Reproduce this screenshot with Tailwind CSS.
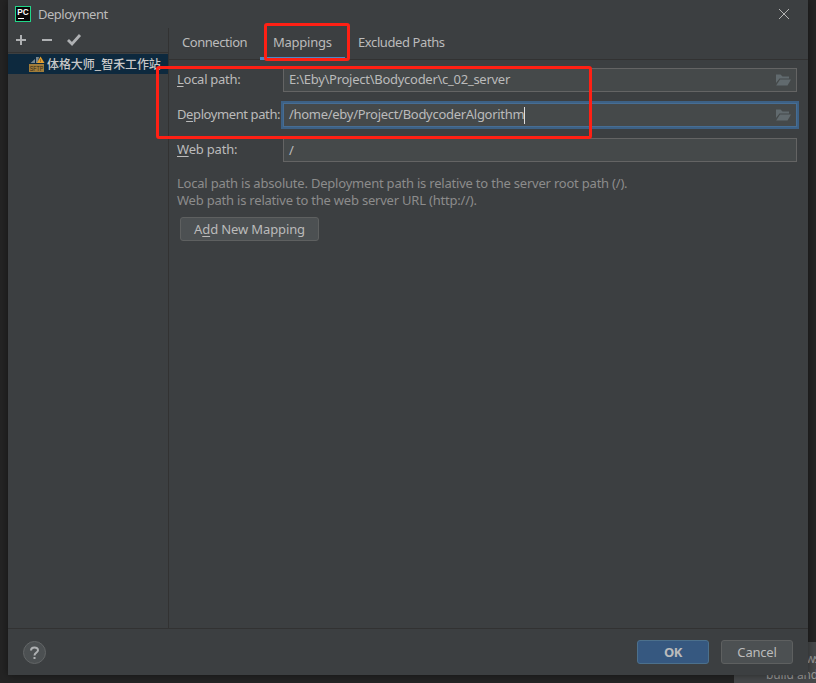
<!DOCTYPE html>
<html lang="en">
<head>
    <meta charset="UTF-8">
    <meta name="viewport" content="width=device-width, initial-scale=1.0">
    <title>Deployment</title>
    <script src="https://cdn.jsdelivr.net/npm/@tailwindcss/browser@4"></script>
</head>
<body class="relative w-[816px] h-[683px] overflow-hidden bg-[#242424] font-['Noto_Sans','Noto_Sans_CJK_SC',sans-serif] text-[13px] leading-[17px] text-[#bbbbbb]">

    <!-- Notification behind the dialog -->
    <div class="absolute left-[734px] top-[642px] w-[82px] h-[41px] bg-[#46484a] text-[12px] text-[#999999]">
        <span class="absolute left-[72px] top-[8px] tracking-[-1px]">ws</span>
        <span class="absolute left-[32px] top-[24px] whitespace-nowrap tracking-[-0.1px]">build and</span>
    </div>

    <!-- Dialog -->
    <div class="relative ml-2 w-[800px] h-[675px] flex flex-col bg-[#3c3f41] shadow-[0_0_8px_rgba(0,0,0,0.45)]">
        <div class="h-7 shrink-0 flex items-center pl-[7px] pr-[18px]">
            <svg class="w-4 h-4" viewBox="0 0 16 16">
                <rect x="0.5" y="0.5" width="15" height="15" fill="#080808" stroke="#21d789"/>
                <text x="2.2" y="9" font-family="Liberation Sans" font-size="9" font-weight="bold" fill="#fff" textLength="11.5" lengthAdjust="spacingAndGlyphs">PC</text>
                <path d="M3 12.5h6" stroke="#fff"/>
            </svg>
            <span class="ml-[7px] tracking-[-0.5px]">Deployment</span>
            <svg class="ml-auto w-3 h-3" viewBox="0 0 12 12">
                <path d="M1 1l10 10M11 1L1 11" stroke="#b4b4b4" fill="none"/>
            </svg>
        </div>

        <div class="flex h-[600px]">
            <div class="w-40 shrink-0">
                <div class="h-[25px] flex items-center pl-2 border-b border-[#323232]">
                    <svg class="w-[70px] h-[14px]" viewBox="0 0 70 14" fill="none" stroke="#afb1b3" stroke-width="2">
                        <path d="M0 7h10M5 2v10"/>
                        <path d="M26 7h10"/>
                        <path d="M52 7l4 4L64 2" stroke-width="2.8"/>
                    </svg>
                </div>
                <div class="mt-px h-5 flex items-center pl-[21px] bg-[#0d293e]">
                    <svg class="w-4 h-4 shrink-0" viewBox="0 0 16 16">
                        <path d="M1.5 7L6 3v4z" fill="#77868f"/>
                        <path d="M7 1h3L8.5 7H7z" fill="#77868f"/>
                        <path d="M11.5 0.5L15.5 7H7.8z" fill="#e3a02f"/>
                        <path d="M11.5 3v3" stroke="#a87022"/>
                        <rect x="0" y="8" width="15" height="8" fill="#a07c3a"/>
                        <text x="0.8" y="14.8" font-family="Liberation Sans" font-size="8" fill="#2e2719" textLength="13.4" lengthAdjust="spacingAndGlyphs">SFTP</text>
                    </svg>
                    <span class="ml-[2px] text-[12px] leading-5 font-medium whitespace-nowrap tracking-[-0.1px] text-[#c8c8c8] font-['Noto_Sans_CJK_SC',sans-serif]">体格大师_智禾工作站</span>
                </div>
            </div>

            <div class="flex-1 border-l border-[#323232]">
                <div class="h-8 flex border-b border-[#323232]">
                    <div class="w-[91px] pt-[6px] pl-[13px] tracking-[-0.45px]">Connection</div>
                    <div class="w-[85px] h-8 pt-[6px] pl-[13px] border-b-3 border-[#4a88c7] tracking-[-0.25px]">Mappings</div>
                    <div class="pt-[6px] pl-[13px] tracking-[-0.4px]">Excluded Paths</div>
                </div>

                <div class="pl-2 pr-[11px] pt-2">
                    <div class="flex items-center h-6">
                        <label class="w-[106px] pb-[2px] tracking-[-0.27px]"><u class="underline-offset-2">L</u>ocal path:</label>
                        <div class="flex-1 h-6 flex items-center justify-between pl-[5px] pr-[5px] border border-[#646464] bg-[#45494a]">
                            <span class="pb-[2px] tracking-[-0.27px]">E:\Eby\Project\Bodycoder\c_02_server</span>
                            <svg class="w-4 h-3" viewBox="0 0 16 12" fill="#616a6e">
                                <path d="M1 0.5h4.5l2 2H14v2H4.5L1 9z"/>
                                <path d="M5 5.5H16l-3.5 6H1.2z"/>
                            </svg>
                        </div>
                    </div>
                    <div class="flex items-center h-6 mt-[11px]">
                        <label class="w-[106px] pb-[2px] whitespace-nowrap tracking-[-0.4px]">D<u class="underline-offset-2">e</u>ployment path:</label>
                        <div class="flex-1 h-6 flex items-center justify-between pl-[5px] pr-[5px] border border-[#466d94] bg-[#45494a] ring-2 ring-[#3d6185]">
                            <span class="flex items-center tracking-[-0.29px]"><span class="pb-[2px]">/home/eby/Project/BodycoderAlgorithm</span><i class="w-px h-[17px] bg-[#dddddd]"></i></span>
                            <svg class="w-4 h-3" viewBox="0 0 16 12" fill="#616a6e">
                                <path d="M1 0.5h4.5l2 2H14v2H4.5L1 9z"/>
                                <path d="M5 5.5H16l-3.5 6H1.2z"/>
                            </svg>
                        </div>
                    </div>
                    <div class="flex items-center h-6 mt-[11px]">
                        <label class="w-[106px] pb-[2px] tracking-[-0.2px]"><u class="underline-offset-2">W</u>eb path:</label>
                        <div class="flex-1 h-6 flex items-center pl-[5px] border border-[#646464] bg-[#45494a]">/</div>
                    </div>
                    <p class="mt-[13px] text-[#8c8c8c] whitespace-nowrap tracking-[-0.21px]">Local path is absolute. Deployment path is relative to the server root path (/).<br>Web path is relative to the web server URL (http://).</p>
                    <button class="mt-2 ml-[3px] w-[139px] h-6 rounded-[3px] border border-[#5e6060] bg-[#4c5052] tracking-[-0.12px]">A<u class="underline-offset-2">d</u>d New Mapping</button>
                </div>
            </div>
        </div>

        <div class="flex-1 flex items-center border-t border-[#323232] pl-[15px] pr-[15px]">
            <div class="w-[23px] h-[23px] mt-px rounded-full border border-[#626566] bg-[#4c5052] flex items-center justify-center">
                <svg class="w-[11px] h-[14px]" viewBox="0 0 11 14" fill="none" stroke="#afb1b3" stroke-width="2">
                    <path d="M2 4.5C2 .5 9 .5 9 4.2C9 6.5 5.5 6.5 5.5 9.5M5.5 11v2"/>
                </svg>
            </div>
            <button class="ml-auto w-[72px] h-6 rounded-[3px] border border-[#4c708c] bg-[#365880] font-bold tracking-[-0.5px]">OK</button>
            <button class="ml-3 w-[72px] h-6 rounded-[3px] border border-[#5e6060] bg-[#4c5052] tracking-[-0.2px]">Cancel</button>
        </div>
    </div>

    <!-- Red highlight marks -->
    <div class="absolute left-[264px] top-[23px] w-[86px] h-[38px] border-3 border-[#ff2014] rounded-[3px]"></div>
    <div class="absolute left-[156px] top-[66px] w-[436px] h-[73px] border-3 border-[#ff2014] rounded-[3px]"></div>
</body>
</html>
